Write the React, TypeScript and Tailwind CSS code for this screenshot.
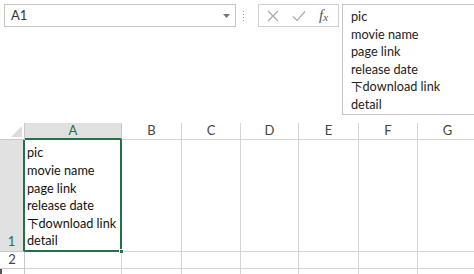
import React from "react";

const cols = [
  { l: "A", w: 97 },
  { l: "B", w: 60 },
  { l: "C", w: 59 },
  { l: "D", w: 58 },
  { l: "E", w: 60 },
  { l: "F", w: 59 },
  { l: "G", w: 60 },
];

const lines = ["pic", "movie name", "page link", "release date", "下download link", "detail"];

function CellText() {
  return (
    <>
      {lines.map((t, i) => (
        <div key={i} className="h-[17.6px] leading-[17.6px] whitespace-nowrap text-[12.7px]">
          {t.startsWith("下") ? (
            <>
              <span style={{ fontFamily: '"Noto Sans CJK SC", sans-serif' }} className="text-[11.5px]">下</span>
              {t.slice(1)}
            </>
          ) : (
            t
          )}
        </div>
      ))}
    </>
  );
}

export default function App() {
  return (
    <div
      className="w-[474px] h-[274px] bg-white overflow-hidden text-[13px] text-[#222]"
      style={{ fontFamily: 'Lato, "Noto Sans CJK SC", sans-serif' }}
    >
      {/* top bar */}
      <div className="flex items-start h-[123px] pt-[4px]">
        <div className="ml-[4px] w-[232px] h-[23px] border border-[#c6c6c6] flex items-center justify-between pl-[6px] pr-[5px]">
          <span className="text-[13px] text-[#333]">A1</span>
          <svg width="7" height="4" viewBox="0 0 7 4">
            <path d="M0 0h7L3.5 4z" fill="#777" />
          </svg>
        </div>
        <div className="w-[22px] h-[23px] flex flex-col items-start pl-[7px] justify-center gap-[2px]">
          <span className="w-[1px] h-[1px] bg-[#999]" />
          <span className="w-[1px] h-[1px] bg-[#999]" />
          <span className="w-[1px] h-[1px] bg-[#999]" />
          <span className="w-[1px] h-[1px] bg-[#999]" />
        </div>
        <div className="w-[81px] h-[23px] border border-[#d0d0d0] flex items-center">
          <div className="w-[27px] flex justify-center">
            <svg width="12" height="12" viewBox="0 0 12 12">
              <path d="M1 1L11 11M11 1L1 11" stroke="#a9a9a9" strokeWidth="1.2" />
            </svg>
          </div>
          <div className="w-[25px] flex justify-center">
            <svg width="14" height="12" viewBox="0 0 14 12">
              <path d="M1 6.5L5 10.5L13 1.5" stroke="#a9a9a9" strokeWidth="1.2" fill="none" />
            </svg>
          </div>
          <div
            className="w-[25px] flex justify-center italic text-[15px] text-[#555] leading-none"
            style={{ fontFamily: '"Liberation Serif", serif' }}
          >
            f<span className="text-[11px] mt-[4px]">x</span>
          </div>
        </div>
        <div className="ml-[3px] flex-1 h-[111px] border border-r-0 border-[#c6c6c6] pl-[8px] pt-[3px]">
          <CellText />
        </div>
      </div>

      {/* grid */}
      <div className="flex h-[17px]">
        <div className="w-[25px] shrink-0 border-r border-b border-[#c8c8c8] bg-white relative">
          <svg className="absolute right-[2px] bottom-[2px]" width="11" height="11" viewBox="0 0 11 11">
            <path d="M11 0V11H0z" fill="#dcdcdc" />
          </svg>
        </div>
        {cols.map((c) => (
          <div
            key={c.l}
            style={{ width: c.w }}
            className={
              c.l === "A"
                ? "shrink-0 bg-[#e1e1e1] border-r border-[#c8c8c8] border-b-2 border-b-[#217346] flex items-center justify-center text-[13px] text-[#217346]"
                : "shrink-0 border-r border-b border-[#d4d4d4] flex items-center justify-center text-[13px] text-[#444]"
            }
          >
            {c.l}
          </div>
        ))}
      </div>

      <div className="flex h-[112px]">
        <div className="w-[25px] shrink-0 bg-[#e1e1e1] border-r-2 border-r-[#217346] border-b border-[#c8c8c8] flex items-end justify-center text-[#217346]">
          1
        </div>
        <div className="w-[97px] shrink-0 relative border-r-2 border-b-2 border-[#217346] pl-[2px] flex flex-col justify-end text-[#111]">
          <CellText />
          <div className="absolute right-[-4px] bottom-[-4px] w-[5px] h-[5px] bg-[#217346] border border-white" />
        </div>
        {cols.slice(1).map((c) => (
          <div key={c.l} style={{ width: c.w }} className="shrink-0 border-r border-b border-[#d4d4d4]" />
        ))}
      </div>

      <div className="flex h-[17px]">
        <div className="w-[25px] shrink-0 border-r border-b border-[#c8c8c8] flex items-center justify-center text-[#444]">
          2
        </div>
        {cols.map((c) => (
          <div key={c.l} style={{ width: c.w }} className="shrink-0 border-r border-b border-[#d4d4d4]" />
        ))}
      </div>

      <div className="flex h-[17px]">
        <div className="w-[25px] shrink-0 border-r border-[#c8c8c8] border-l-2 border-l-[#555]" />
        {cols.map((c) => (
          <div key={c.l} style={{ width: c.w }} className="shrink-0 border-r border-[#d4d4d4]" />
        ))}
      </div>
    </div>
  );
}
